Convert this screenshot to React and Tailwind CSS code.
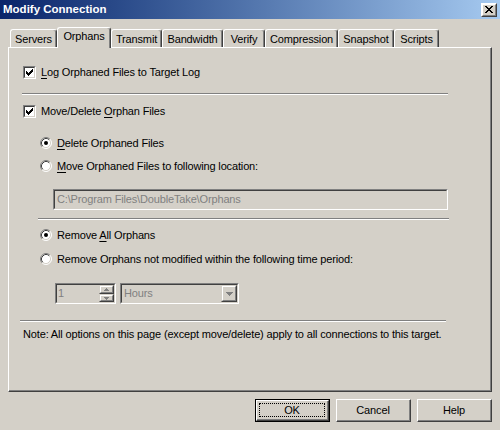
import React from "react";

const CHECK = ["......X", ".....XX", "X...XXX", "XX.XXX.", "XXXXX..", ".XXX...", "..X...."];
const CLOSE = ["XX....XX", ".XX..XX.", "..XXXX..", "...XX...", "..XXXX..", ".XX..XX.", "XX....XX"];
const UP = ["..X..", ".XXX.", "XXXXX"];
const DOWN = ["XXXXX", ".XXX.", "..X.."];
const COMBO = ["XXXXXXX", ".XXXXX.", "..XXX..", "...X..."];

function Pixels({ rows, color }) {
  const rects = [];
  rows.forEach((r, y) =>
    [...r].forEach((c, x) => {
      if (c === "X") rects.push(<rect key={x + "-" + y} x={x} y={y} width="1" height="1" fill={color} />);
    })
  );
  return (
    <svg width={rows[0].length} height={rows.length} shapeRendering="crispEdges" className="block">
      {rects}
    </svg>
  );
}

function Checkbox() {
  return (
    <span className="flex w-[13px] h-[13px] shrink-0 border border-t-[#808080] border-l-[#808080] border-r-white border-b-white">
      <span className="flex w-full h-full items-center justify-center bg-white border border-t-[#404040] border-l-[#404040] border-r-[#d4d0c8] border-b-[#d4d0c8]">
        <Pixels rows={CHECK} color="#000" />
      </span>
    </span>
  );
}

function Radio({ on }) {
  return (
    <svg width="12" height="12" viewBox="0 0 12 12" className="block shrink-0">
      <circle cx="6" cy="6" r="5" fill="white" />
      <path d="M2.11 9.89 A5.5 5.5 0 0 1 9.89 2.11" stroke="#808080" fill="none" />
      <path d="M9.89 2.11 A5.5 5.5 0 0 1 2.11 9.89" stroke="#ffffff" fill="none" />
      <path d="M2.82 9.18 A4.5 4.5 0 0 1 9.18 2.82" stroke="#404040" fill="none" />
      <path d="M9.18 2.82 A4.5 4.5 0 0 1 2.82 9.18" stroke="#d4d0c8" fill="none" />
      {on && <circle cx="6" cy="6" r="2" fill="#000" />}
    </svg>
  );
}

function U({ children }) {
  return <span className="underline underline-offset-[2px]">{children}</span>;
}

function Sep({ className }) {
  return <div className={"h-[2px] border-t border-t-[#808080] border-b border-b-white " + className} />;
}

function Sunken({ className, children }) {
  return (
    <div className={"flex border border-t-[#808080] border-l-[#808080] border-r-white border-b-white " + className}>
      <div className="flex flex-1 border border-t-[#404040] border-l-[#404040] border-r-[#d4d0c8] border-b-[#d4d0c8] bg-[#d4d0c8]">
        {children}
      </div>
    </div>
  );
}

function Raised({ className, children }) {
  return (
    <div className={"flex border border-t-[#d4d0c8] border-l-[#d4d0c8] border-r-[#404040] border-b-[#404040] " + className}>
      <div className="flex flex-1 items-center justify-center border border-t-white border-l-white border-r-[#808080] border-b-[#808080] bg-[#d4d0c8]">
        {children}
      </div>
    </div>
  );
}

function Tab({ label, w, selected }) {
  if (selected) {
    return (
      <div
        className={
          "relative z-10 mb-[-1px] h-[21px] flex justify-center pt-[2px] bg-[#d4d0c8] rounded-t-[3px] border-t border-l border-white border-r border-r-[#404040] shadow-[inset_-1px_0_0_#808080] " +
          w
        }
      >
        <span className="leading-[13px]">{label}</span>
      </div>
    );
  }
  return (
    <div
      className={
        "h-[18px] flex justify-center pt-[3px] bg-[#d4d0c8] rounded-t-[3px] border-t border-l border-white border-r border-r-[#404040] shadow-[inset_-1px_0_0_#808080] " +
        w
      }
    >
      <span className="leading-[13px]">{label}</span>
    </div>
  );
}

function Button({ children, def }) {
  if (def) {
    return (
      <div className="flex w-[75px] h-[23px] border border-black">
        <div className="flex flex-1 border border-t-white border-l-white border-r-[#404040] border-b-[#404040]">
          <div className="flex flex-1 p-[2px] border-r border-b border-r-[#808080] border-b-[#808080] bg-[#d4d0c8]">
            <div className="flex flex-1 items-center justify-center border border-dotted border-black">{children}</div>
          </div>
        </div>
      </div>
    );
  }
  return (
    <div className="flex w-[75px] h-[23px] border border-t-white border-l-white border-r-[#404040] border-b-[#404040]">
      <div className="flex flex-1 items-center justify-center border-r border-b border-r-[#808080] border-b-[#808080] bg-[#d4d0c8]">
        {children}
      </div>
    </div>
  );
}

export default function App() {
  return (
    <div className="w-[500px] h-[430px] bg-[#d4d0c8] font-['Liberation_Sans',Arial,sans-serif] text-[11px] tracking-[-0.15px] text-black overflow-hidden flex flex-col select-none">
      {/* Title bar */}
      <div className="h-[19px] shrink-0 flex items-center justify-between bg-linear-to-r from-[#0a246a] to-[#a6caf0] pl-[3px] pr-[3px]">
        <span className="text-white font-bold text-[11.5px] tracking-normal leading-none">Modify Connection</span>
        <Raised className="w-[16px] h-[14px] border-t-white border-l-white">
          <Pixels rows={CLOSE} color="#000" />
        </Raised>
      </div>

      {/* Tabs */}
      <div className="mt-[8px] h-[20px] flex items-end pl-[10px]">
        <Tab label="Servers" w="w-[47px]" />
        <Tab label="Orphans" w="w-[54px]" selected />
        <Tab label="Transmit" w="w-[51px]" />
        <Tab label="Bandwidth" w="w-[61px]" />
        <Tab label="Verify" w="w-[42px]" />
        <Tab label="Compression" w="w-[73px]" />
        <Tab label="Snapshot" w="w-[56px]" />
        <Tab label="Scripts" w="w-[45px]" />
      </div>

      {/* Panel */}
      <div className="ml-[8px] w-[484px] h-[345px] flex flex-col border-t border-l border-white border-r border-b border-r-[#404040] border-b-[#404040] shadow-[inset_-1px_-1px_0_#808080]">
        <div className="mt-[16px] ml-[14px] h-[16px] flex items-center gap-[5px]">
          <Checkbox />
          <span className="leading-[13px]">
            <U>L</U>og Orphaned Files to Target Log
          </span>
        </div>

        <Sep className="mt-[13px] ml-[13px] w-[426px]" />

        <div className="mt-[8px] ml-[14px] h-[16px] flex items-center gap-[5px]">
          <Checkbox />
          <span className="leading-[13px]">
            Move/Delete <U>O</U>rphan Files
          </span>
        </div>

        <div className="mt-[16px] ml-[31px] h-[16px] flex items-center gap-[5px]">
          <Radio on />
          <span className="leading-[13px]">
            <U>D</U>elete Orphaned Files
          </span>
        </div>

        <div className="mt-[7px] ml-[31px] h-[16px] flex items-center gap-[5px]">
          <Radio />
          <span className="leading-[13px]">
            <U>M</U>ove Orphaned Files to following location:
          </span>
        </div>

        <Sunken className="mt-[15px] ml-[44px] w-[395px] h-[21px]">
          <span className="pl-[2px] self-center leading-[13px] text-[#808080]">{"C:\\Program Files\\DoubleTake\\Orphans"}</span>
        </Sunken>

        <Sep className="mt-[8px] ml-[29px] w-[411px]" />

        <div className="mt-[7px] ml-[31px] h-[16px] flex items-center gap-[5px]">
          <Radio on />
          <span className="leading-[13px]">
            Remove <U>A</U>ll Orphans
          </span>
        </div>

        <div className="mt-[8px] ml-[31px] h-[16px] flex items-center gap-[5px]">
          <Radio />
          <span className="leading-[13px]">Remove Orphans not modified within the following time period:</span>
        </div>

        <div className="mt-[16px] ml-[46px] h-[21px] flex gap-[4px]">
          <Sunken className="w-[61px] h-[21px]">
            <span className="flex-1 pl-[1px] self-center leading-[13px] text-[#808080]">1</span>
            <div className="w-[15px] flex flex-col">
              <Raised className="h-[9px] border-t-[#d4d0c8]">
                <Pixels rows={UP} color="#808080" />
              </Raised>
              <Raised className="h-[8px]">
                <Pixels rows={DOWN} color="#808080" />
              </Raised>
            </div>
          </Sunken>
          <Sunken className="w-[119px] h-[21px]">
            <span className="flex-1 pl-[2px] self-center leading-[13px] text-[#808080]">Hours</span>
            <Raised className="w-[16px] h-[17px]">
              <Pixels rows={COMBO} color="#808080" />
            </Raised>
          </Sunken>
        </div>

        <Sep className="mt-[16px] ml-[11px] w-[426px]" />

        <div className="mt-[4px] ml-[14px] h-[16px] flex items-center">
          <span className="leading-[13px]">
            Note: All options on this page (except move/delete) apply to all connections to this target.
          </span>
        </div>
      </div>

      {/* Buttons */}
      <div className="mt-[7px] ml-[8px] w-[484px] flex justify-end gap-[6px]">
        <Button def>OK</Button>
        <Button>Cancel</Button>
        <Button>Help</Button>
      </div>
    </div>
  );
}
